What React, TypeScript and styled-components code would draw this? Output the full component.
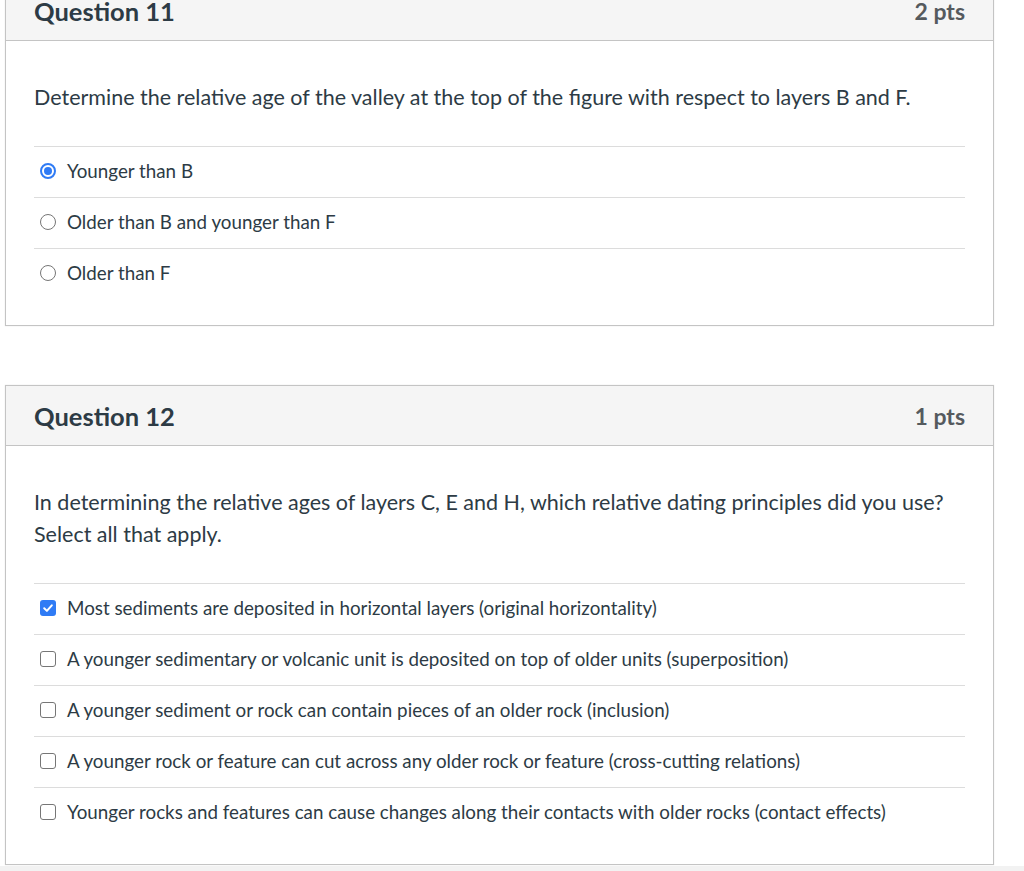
import React from 'react';
import styled, { createGlobalStyle } from 'styled-components';

const GlobalStyle = createGlobalStyle`
  html, body {
    margin: 0;
    padding: 0;
    background: #ffffff;
  }
  body {
    font-family: Lato, 'Noto Sans', sans-serif;
    color: #2d3b45;
  }
`;

const Page = styled.div`
  display: flex;
  flex-direction: column;
  gap: 59px;
  margin-top: -20px;
  padding-left: 5px;
  width: 989px;
`;

const QuestionBox = styled.div`
  border: 1px solid #c4c4c4;
  box-shadow: 0 0 1px rgba(0, 0, 0, 0.15);
  background: #ffffff;
`;

const Header = styled.div`
  height: 59px;
  display: flex;
  align-items: center;
  justify-content: space-between;
  padding: 0 28px;
  background: #f5f5f5;
  border-bottom: 1px solid #c4c4c4;
`;

const Title = styled.h2`
  margin: 0;
  font-size: 25.5px;
  font-weight: 700;
  color: #2d3b45;
`;

const Points = styled.span`
  font-size: 23px;
  font-weight: 700;
  color: #555a5e;
`;

const Body = styled.div`
  padding: 40px 28px 26px;
`;

const Prompt = styled.p`
  margin: 0 0 33px;
  font-size: 21.5px;
  line-height: 32px;
  color: #2d3b45;
`;

const AnswerList = styled.div`
  display: flex;
  flex-direction: column;
`;

const Answer = styled.label`
  height: 47px;
  padding-bottom: 3px;
  display: flex;
  align-items: center;
  gap: 11px;
  padding-left: 6px;
  border-top: 1px solid #dcdcdc;
  font-size: 18.8px;
  color: #2d3b45;
  box-sizing: content-box;
`;

const RadioMark = styled.span<{ $checked: boolean }>`
  width: 16px;
  height: 16px;
  box-sizing: border-box;
  border-radius: 50%;
  border: ${(p) => (p.$checked ? '2px solid #2f7bf5' : '1px solid #767676')};
  display: flex;
  align-items: center;
  justify-content: center;
  flex-shrink: 0;

  &::after {
    content: '';
    display: ${(p) => (p.$checked ? 'block' : 'none')};
    width: 8px;
    height: 8px;
    border-radius: 50%;
    background: #2f7bf5;
  }
`;

const CheckMark = styled.span<{ $checked: boolean }>`
  width: 16px;
  height: 16px;
  box-sizing: border-box;
  border-radius: 3px;
  border: ${(p) => (p.$checked ? 'none' : '1px solid #767676')};
  background: ${(p) => (p.$checked ? '#2f7bf5' : '#ffffff')};
  display: flex;
  align-items: center;
  justify-content: center;
  flex-shrink: 0;
`;

const Footer = styled.div`
  height: 40px;
  margin-top: 1px;
  background: #f2f2f2;
`;

type Choice = { text: string; checked?: boolean };

const q11: Choice[] = [
  { text: 'Younger than B', checked: true },
  { text: 'Older than B and younger than F' },
  { text: 'Older than F' },
];

const q12: Choice[] = [
  { text: 'Most sediments are deposited in horizontal layers (original horizontality)', checked: true },
  { text: 'A younger sedimentary or volcanic unit is deposited on top of older units (superposition)' },
  { text: 'A younger sediment or rock can contain pieces of an older rock (inclusion)' },
  { text: 'A younger rock or feature can cut across any older rock or feature (cross-cutting relations)' },
  { text: 'Younger rocks and features can cause changes along their contacts with older rocks (contact effects)' },
];

const Tick = () => (
  <svg width="12" height="12" viewBox="0 0 12 12">
    <path d="M2.2 6.3 L4.9 8.9 L9.8 3.3" fill="none" stroke="#ffffff" strokeWidth="2" strokeLinecap="round" strokeLinejoin="round" />
  </svg>
);

const App: React.FC = () => (
  <>
    <GlobalStyle />
    <Page>
      <QuestionBox>
        <Header>
          <Title>Question 11</Title>
          <Points>2 pts</Points>
        </Header>
        <Body>
          <Prompt>Determine the relative age of the valley at the top of the figure with respect to layers B and F.</Prompt>
          <AnswerList>
            {q11.map((c) => (
              <Answer key={c.text}>
                <RadioMark $checked={!!c.checked} />
                {c.text}
              </Answer>
            ))}
          </AnswerList>
        </Body>
      </QuestionBox>

      <QuestionBox>
        <Header>
          <Title>Question 12</Title>
          <Points>1 pts</Points>
        </Header>
        <Body>
          <Prompt>
            In determining the relative ages of layers C, E and H, which relative dating principles did you use?
            <br />
            Select all that apply.
          </Prompt>
          <AnswerList>
            {q12.map((c) => (
              <Answer key={c.text}>
                <CheckMark $checked={!!c.checked}>{c.checked && <Tick />}</CheckMark>
                {c.text}
              </Answer>
            ))}
          </AnswerList>
        </Body>
      </QuestionBox>
    </Page>
    <Footer />
  </>
);

export default App;
